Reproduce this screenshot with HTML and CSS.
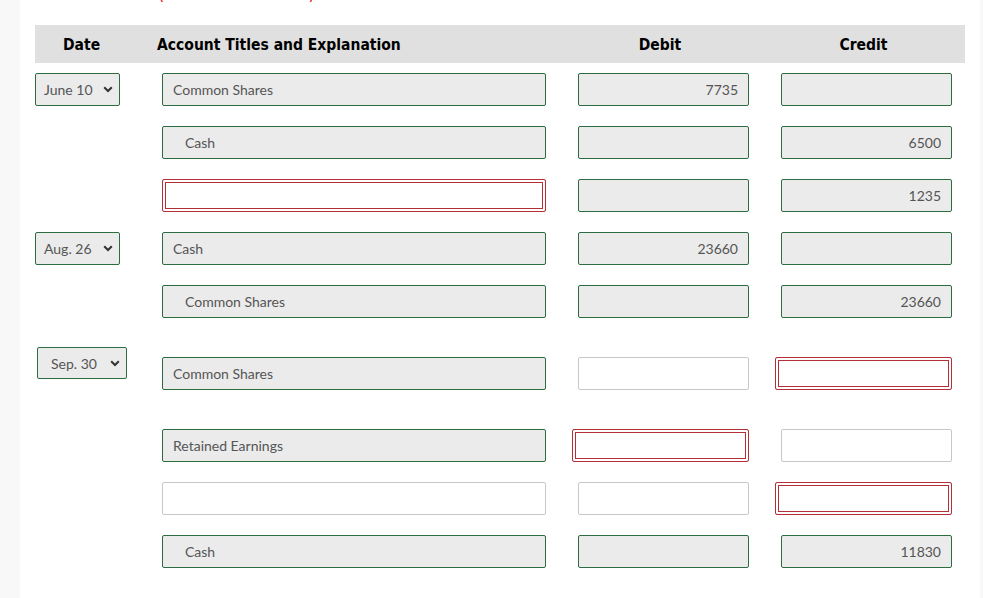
FILE: index.html
```html
<!DOCTYPE html>
<html lang="en">
<head>
  <meta charset="UTF-8" />
  <meta name="viewport" content="width=device-width, initial-scale=1.0"/>
  <title>Journal Entries</title>
  <link rel="stylesheet" href="styles.css">
</head>
<body>
  <div class="page">
    <div class="note"><span>(Round to 0 decimals.)</span></div>

    <div class="head">
      <div class="h-date">Date</div>
      <div class="h-acct">Account Titles and Explanation</div>
      <div class="h-num debit">Debit</div>
      <div class="h-num">Credit</div>
    </div>

    <!-- June 10 -->
    <div class="row">
      <div class="date">
        <div class="select"><span>June 10</span>
          <svg width="10" height="7" viewBox="0 0 10 7"><path d="M1.2 1.2l3.8 3.8 3.8-3.8" fill="none" stroke="#333" stroke-width="2"/></svg>
        </div>
      </div>
      <input class="field acct" type="text" value="Common Shares" readonly>
      <input class="field num" type="text" value="7735" readonly>
      <input class="field num" type="text" value="" readonly>
    </div>
    <div class="row">
      <div class="date"></div>
      <input class="field acct indent" type="text" value="Cash" readonly>
      <input class="field num" type="text" value="" readonly>
      <input class="field num" type="text" value="6500" readonly>
    </div>
    <div class="row">
      <div class="date"></div>
      <input class="field acct bad" type="text" value="" readonly>
      <input class="field num" type="text" value="" readonly>
      <input class="field num" type="text" value="1235" readonly>
    </div>

    <!-- Aug. 26 -->
    <div class="row">
      <div class="date">
        <div class="select"><span>Aug. 26</span>
          <svg width="10" height="7" viewBox="0 0 10 7"><path d="M1.2 1.2l3.8 3.8 3.8-3.8" fill="none" stroke="#333" stroke-width="2"/></svg>
        </div>
      </div>
      <input class="field acct" type="text" value="Cash" readonly>
      <input class="field num" type="text" value="23660" readonly>
      <input class="field num" type="text" value="" readonly>
    </div>
    <div class="row">
      <div class="date"></div>
      <input class="field acct indent" type="text" value="Common Shares" readonly>
      <input class="field num" type="text" value="" readonly>
      <input class="field num" type="text" value="23660" readonly>
    </div>

    <!-- Sep. 30 -->
    <div class="row spaced">
      <div class="date">
        <div class="select sep"><span>Sep. 30</span>
          <svg width="10" height="7" viewBox="0 0 10 7"><path d="M1.2 1.2l3.8 3.8 3.8-3.8" fill="none" stroke="#333" stroke-width="2"/></svg>
        </div>
      </div>
      <input class="field acct" type="text" value="Common Shares" readonly>
      <input class="field num empty" type="text" value="" readonly>
      <input class="field num bad wide" type="text" value="" readonly>
    </div>
    <div class="row spaced">
      <div class="date"></div>
      <input class="field acct" type="text" value="Retained Earnings" readonly>
      <input class="field num bad wide" type="text" value="" readonly>
      <input class="field num empty" type="text" value="" readonly>
    </div>
    <div class="row">
      <div class="date"></div>
      <input class="field acct empty" type="text" value="" readonly>
      <input class="field num empty" type="text" value="" readonly>
      <input class="field num bad wide" type="text" value="" readonly>
    </div>
    <div class="row">
      <div class="date"></div>
      <input class="field acct indent" type="text" value="Cash" readonly>
      <input class="field num" type="text" value="" readonly>
      <input class="field num" type="text" value="11830" readonly>
    </div>
  </div>
</body>
</html>
```

FILE: styles.css
```css
body {
  margin: 0;
  background: #f8f8f8;
  font-family: 'Lato', 'Open Sans', sans-serif;
  color: #555;
}

.page {
  margin-left: 20px;
  width: 960px;
  min-height: 598px;
  background: #fff;
  padding-left: 15px;
  box-sizing: border-box;
  overflow: hidden;
}

.note {
  height: 3px;
  overflow: hidden;
  padding-left: 124px;
  color: #e0161e;
  font-size: 16px;
}

.note span {
  display: block;
  line-height: 20px;
  margin-top: -16px;
}

.head {
  display: grid;
  grid-template-columns: 127px 416px 203px 171px;
  width: 930px;
  height: 38px;
  margin-top: 22px;
  background: #e0e0e0;
  font-family: 'DejaVu Sans Condensed', 'DejaVu Sans', sans-serif;
  font-weight: bold;
  font-size: 15.5px;
  line-height: 40px;
  color: #000;
}

.h-date {
  padding-left: 28px;
}

.h-acct {
  margin-left: -5px;
}

.h-num {
  text-align: center;
  padding-right: 6px;
}

.h-num.debit {
  padding-right: 39px;
}

.row {
  display: grid;
  grid-template-columns: 127px 416px 203px 171px;
  height: 33px;
  margin-top: 20px;
  align-items: start;
}

.head + .row {
  margin-top: 10px;
}

.row.spaced {
  margin-top: 39px;
}

.select {
  width: 85px;
  height: 33px;
  box-sizing: border-box;
  border: 1px solid #2d6b40;
  border-radius: 2px;
  background: #ebebeb;
  display: flex;
  align-items: center;
  justify-content: space-between;
  padding: 0 6px 0 8px;
  font-size: 14px;
}

.select.sep {
  width: 90px;
  height: 32px;
  margin: -10px 0 0 2px;
  padding-left: 13px;
}

.field {
  height: 33px;
  box-sizing: border-box;
  margin: 0;
  border: 1px solid #2d6b40;
  border-radius: 2px;
  background: #ebebeb;
  font-family: 'Lato', 'Open Sans', sans-serif;
  font-size: 14px;
  color: #555;
  padding: 0 10px;
  outline: none;
}

.acct {
  width: 384px;
}

.acct.indent {
  padding-left: 22px;
}

.num {
  width: 171px;
  text-align: right;
}

.field.empty {
  background: #fff;
  border-color: #c8c8c8;
}

.field.bad {
  background: #fff;
  border-color: #b52f38;
  box-shadow: inset 0 0 0 2px #fff, inset 0 0 0 3px #b52f38;
}

.field.bad.wide {
  width: 177px;
  margin-left: -6px;
}
```
